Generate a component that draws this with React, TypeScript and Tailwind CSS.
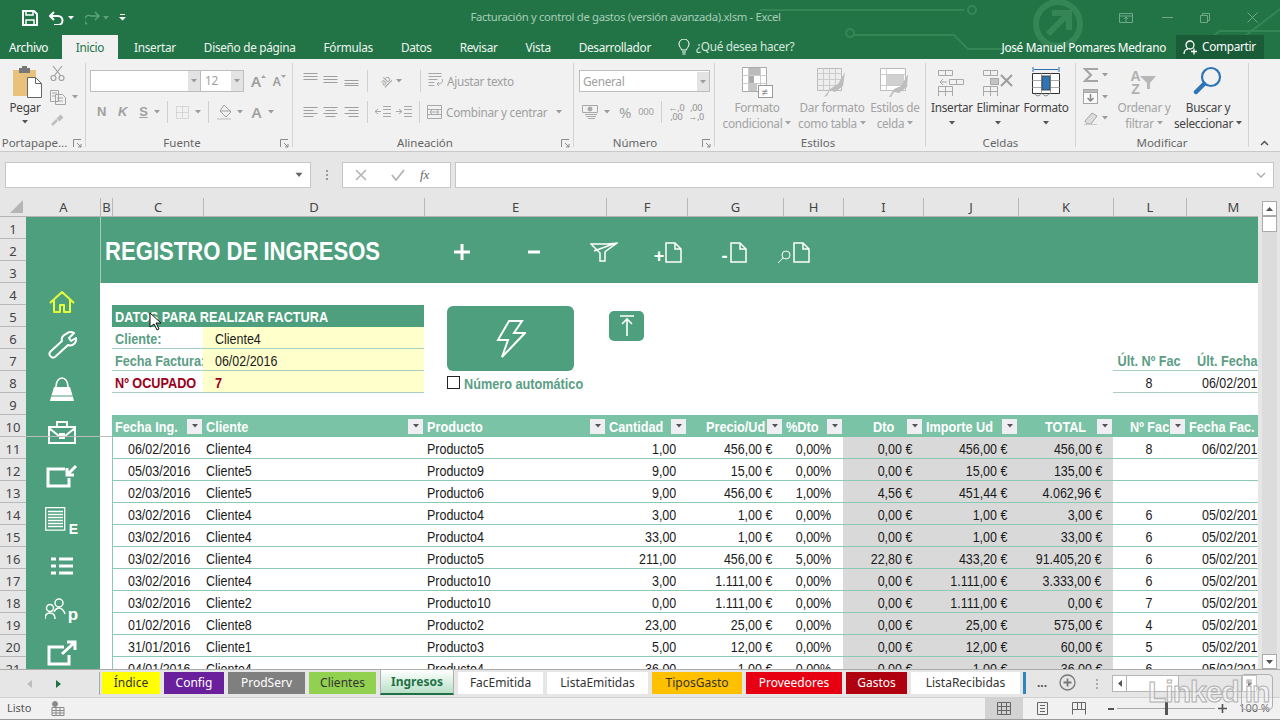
import React from "react";

const SHEETFONT = "font-['Liberation_Sans',sans-serif]";
const ROW = ["", "row-start-1", "row-start-2", "row-start-3", "row-start-4", "row-start-5", "row-start-6", "row-start-7", "row-start-8", "row-start-9", "row-start-10", "row-start-11", "row-start-12", "row-start-13", "row-start-14", "row-start-15", "row-start-16", "row-start-17", "row-start-18", "row-start-19", "row-start-20", "row-start-21"];

// Arial Narrow is not installed: the condensed look comes from a horizontal scale on the text box
const Nw = ({ o = "origin-left", b = false, children }: { o?: string; b?: boolean; children: React.ReactNode }) => (
  <span className={"inline-block whitespace-nowrap translate-y-[1.5px] " + (b ? "scale-x-[.875] " : "scale-x-[.86] ") + o}>{children}</span>
);

const Svg = ({ w, h, c = "#9b9b9b", sw = 1, className = "", children }: { w: number; h: number; c?: string; sw?: number; className?: string; children: React.ReactNode }) => (
  <svg width={w} height={h} viewBox={`0 0 ${w} ${h}`} fill="none" stroke={c} strokeWidth={sw} className={"shrink-0 block " + className}>{children}</svg>
);
const Caret = ({ c = "#9b9b9b", className = "" }: { c?: string; className?: string }) => (
  <svg width="6" height="4" viewBox="0 0 6 4" className={"shrink-0 block " + className}><path d="M0 0h6L3 3.5z" fill={c} /></svg>
);
const Launcher = () => (
  <Svg w={9} h={9} c="#8a8a8a"><path d="M.5 8V.5H8M4 4l4 4M8 5v3H5" /></Svg>
);

const Group = ({ className, label, labelClass = "", launcher, children }: { className: string; label: string; labelClass?: string; launcher?: boolean; children: React.ReactNode }) => (
  <div className={"flex flex-col h-[84px] mt-[4px] border-r border-[#d4d4d4] shrink-0 " + className}>
    <div className="h-[71px] flex shrink-0">{children}</div>
    <div className={"h-[18px] shrink-0 flex items-center justify-center relative text-[11.5px] text-[#666] whitespace-nowrap " + labelClass}>
      {label}
      {launcher && <span className="absolute right-[3px] top-[5px]"><Launcher /></span>}
    </div>
  </div>
);

const BigBtn = ({ className, icon, l1, l2, faded = true, caret = true }: { className: string; icon: React.ReactNode; l1: string; l2?: string; faded?: boolean; caret?: boolean }) => (
  <div className={"flex flex-col items-center leading-[16px] shrink-0 whitespace-nowrap " + (faded ? "text-[#a3a3a3] " : "text-[#444] ") + className}>
    <div className="h-[33px] mt-[3px] flex items-center justify-center">{icon}</div>
    <div>{l1}</div>
    <div className="flex items-center gap-[3px] h-[16px]">
      {l2}
      {caret && <Caret c={faded ? "#a3a3a3" : "#555"} />}
    </div>
  </div>
);

const Paste = () => (
  <svg width="29" height="32" viewBox="0 0 29 32" className="block">
    <rect x="0" y="4" width="23" height="26" fill="#e8c27a" />
    <rect x="6" y="2" width="11" height="5" fill="#777" />
    <rect x="9" y="0" width="5" height="3" fill="#777" />
    <path d="M14.5 11.5h8l6 6v14h-14z" fill="#fff" stroke="#666" />
    <path d="M22.500 11.500v6h6" fill="none" stroke="#666" />
  </svg>
);

const AlignLines = ({ ys, lens, anchor }: { ys: number[]; lens: number[]; anchor: "l" | "c" | "r" }) => (
  <Svg w={15} h={16} c="#9f9f9f">
    {ys.map((y, i) => {
      const len = lens[i % lens.length];
      const x = anchor === "l" ? 0.5 : anchor === "c" ? 7.500 - len / 2 : 14.500 - len;
      return <path key={i} d={`M${x} ${y + 0.5}h${len}`} />;
    })}
  </Svg>
);

const Ribbon = () => (
  <div className="flex h-[93px] bg-[#f1f1f1] border-b border-[#c9c9c9] relative text-[11.8px] tracking-[-.3px]">
    <Group className="w-[86px]" label="Portapape..." labelClass="pr-[16px] tracking-[0px]" launcher>
      <div className="w-[50px] flex flex-col items-center">
        <div className="mt-[3px] ml-[5px]"><Paste /></div>
        <div className="text-[#444] leading-[16px] mt-[1px]">Pegar</div>
        <Caret c="#555" className="mt-[5px]" />
      </div>
      <div className="flex flex-col pt-[2px] gap-[8px]">
        <Svg w={15} h={16} c="#a0a0a0" sw={1.2}><path d="M3 1l8 10M12 1L4 11" /><circle cx="3.500" cy="13" r="2.500" /><circle cx="11.500" cy="13" r="2.500" /></Svg>
        <div className="flex items-center gap-[6px]">
          <Svg w={16} h={16} c="#a5a5a5"><path d="M.5 1.500h8v11h-8zM5.500 5.500h7l3 3v7h-10zM2 4h5M2 7h3M7 9h6M7 12h6" /></Svg>
          <Caret />
        </div>
        <Svg w={16} h={14} c="#bdbdbd" sw={2.500}><path d="M2 12l5-5" /><path d="M8 7l4-4" strokeWidth={4} /></Svg>
      </div>
    </Group>
    <Group className="w-[207px]" label="Fuente" labelClass="pr-[14px] tracking-[0px]" launcher>
      <div className="pl-[4px] w-full">
        <div className="flex items-center mt-[7px] h-[22px]">
          <div className="w-[110px] h-[22px] bg-white border border-[#bdbdbd] flex justify-end border-r-0">
            <div className="w-[12px] bg-[#e3e3e3] flex items-center justify-center"><Caret /></div>
          </div>
          <div className="w-[44px] h-[22px] bg-white border border-[#bdbdbd] flex justify-between items-center pl-[4px] text-[#a0a0a0]">
            12
            <div className="w-[12px] h-full bg-[#e3e3e3] flex items-center justify-center"><Caret /></div>
          </div>
          <span className="ml-[7px] text-[15px] font-semibold text-[#9c9c9c] leading-none">A</span>
          <Svg w={5} h={3} c="#888" className="mb-[10px]"><path d="M0 3l2.500-3L5 3z" fill="#a4a4a4" stroke="none" /></Svg>
          <span className="ml-[7px] text-[12px] font-semibold text-[#9c9c9c] leading-none mt-[2px]">A</span>
          <Svg w={5} h={3} c="#888" className="mb-[10px]"><path d="M0 0l2.500 3L5 0z" fill="#a4a4a4" stroke="none" /></Svg>
        </div>
        <div className="flex items-center mt-[9px] h-[22px] text-[#a0a0a0]">
          <span className="ml-[7px] text-[13px] font-bold font-['Liberation_Sans']">N</span>
          <span className="ml-[12px] text-[13px] font-bold italic font-['Liberation_Sans']">K</span>
          <span className="ml-[12px] text-[13px] font-bold underline font-['Liberation_Sans']">S</span>
          <Caret className="ml-[6px]" />
          <div className="w-px h-[22px] bg-[#d0d0d0] ml-[7px]" />
          <Svg w={13} h={13} c="#bcbcbc" className="ml-[8px]"><path d="M.5.500h12v12H.500zM6.500.500v12M.500 6.500h12" strokeDasharray="1 1" /></Svg>
          <Caret className="ml-[6px]" />
          <div className="w-px h-[22px] bg-[#d0d0d0] ml-[7px]" />
          <Svg w={18} h={16} c="#a0a0a0" className="ml-[8px]"><path d="M7 1l7 7-5 5-6-6zM3 7h11" /><path d="M0 15h14" stroke="#d6d6d6" strokeWidth={2} /></Svg>
          <Caret className="ml-[2px]" />
          <span className="ml-[9px] text-[15px] font-semibold">A</span>
          <Caret className="ml-[7px]" />
        </div>
      </div>
    </Group>
    <Group className="w-[281px]" label="Alineación" labelClass="pr-[16px] tracking-[0px]" launcher>
      <div className="pl-[10px] w-full">
        <div className="flex items-start mt-[7px] h-[22px]">
          <AlignLines ys={[3, 6, 9]} lens={[14]} anchor="c" />
          <span className="w-[5px]" />
          <AlignLines ys={[6, 9, 12]} lens={[14]} anchor="c" />
          <span className="w-[6px]" />
          <AlignLines ys={[10, 13, 15]} lens={[14]} anchor="c" />
          <div className="w-px h-[22px] bg-[#d0d0d0] ml-[8px]" />
          <div className="w-[15px] h-[16px] ml-[9px] mt-[2px] flex items-center justify-center text-[9px] leading-none text-[#a0a0a0] -rotate-45 overflow-visible underline">ab</div>
          <Caret className="ml-[4px] mt-[9px]" />
          <div className="w-px h-[22px] bg-[#d0d0d0] ml-[18px]" />
          <Svg w={15} h={16} c="#a8a8a8" className="ml-[7px] mt-[2px]"><path d="M.5 1.500h13M.5 4.500h13M.5 7.500h9M.5 10.500h6M.5 13.500h6M14 7c2 3-1 5-5 5M11 10l-2 2 2 2" /></Svg>
          <span className="ml-[4px] text-[#a0a0a0] leading-[23px] whitespace-nowrap">Ajustar texto</span>
        </div>
        <div className="flex items-start mt-[9px] h-[22px]">
          <AlignLines ys={[6, 9, 12, 15]} lens={[14, 10]} anchor="l" />
          <span className="w-[5px]" />
          <AlignLines ys={[6, 9, 12, 15]} lens={[14, 10]} anchor="c" />
          <span className="w-[6px]" />
          <AlignLines ys={[6, 9, 12, 15]} lens={[14, 10]} anchor="r" />
          <div className="w-px h-[22px] bg-[#d0d0d0] ml-[8px]" />
          <Svg w={16} h={14} c="#a8a8a8" className="ml-[7px] mt-[4px]"><path d="M8 1.500h8M8 4.500h8M8 8.500h8M8 11.500h8" /><path d="M6 6.500H0M3 4l-3 2.500L3 9" /></Svg>
          <Svg w={16} h={14} c="#a8a8a8" className="ml-[5px] mt-[4px]"><path d="M8 1.500h8M8 4.500h8M8 8.500h8M8 11.500h8" /><path d="M0 6.500h6M3 4l3 2.500L3 9" /></Svg>
          <div className="w-px h-[22px] bg-[#d0d0d0] ml-[7px]" />
          <Svg w={15} h={14} c="#a8a8a8" className="ml-[7px] mt-[4px]"><path d="M.5.500h14v13H.500zM.5 4.500h14M.5 9.500h14M3 7h9M5 5l-2 2 2 2M10 5l2 2-2 2" /></Svg>
          <span className="ml-[4px] text-[#a0a0a0] leading-[22px] whitespace-nowrap">Combinar y centrar</span>
          <Caret className="ml-[9px] mt-[9px]" />
        </div>
      </div>
    </Group>
    <Group className="w-[141px]" label="Número" labelClass="pr-[18px] tracking-[0px]" launcher>
      <div className="pl-[5px] w-full">
        <div className="mt-[7px] w-[131px] h-[22px] bg-white border border-[#bdbdbd] flex justify-between items-center pl-[3px] pt-[1px] text-[#a0a0a0]">
          General
          <div className="w-[12px] h-full bg-[#e3e3e3] flex items-center justify-center"><Caret /></div>
        </div>
        <div className="flex items-center mt-[9px] h-[22px] text-[#a0a0a0]">
          <Svg w={17} h={16} c="#a8a8a8" className="ml-[3px]"><path d="M.5 1.500h15v7H.500z" /><circle cx="8" cy="5" r="2" fill="#a8a8a8" /><path d="M3 10.500h12M4 12.500h10M6 14.500h7" /></Svg>
          <Caret className="ml-[5px]" />
          <span className="ml-[9px] text-[15px] leading-none">%</span>
          <span className="ml-[7px] text-[9.5px] leading-none">000</span>
          <div className="w-px h-[22px] bg-[#d0d0d0] ml-[7px]" />
          <span className="ml-[7px] text-[9px] leading-[9px] text-center text-[#8f8f8f] whitespace-nowrap">←,0<br />,00</span>
          <span className="ml-[4px] text-[9px] leading-[9px] text-center text-[#8f8f8f] whitespace-nowrap">,00<br />→,0</span>
        </div>
      </div>
    </Group>
    <Group className="w-[211px]" label="Estilos" labelClass="pr-[4px] tracking-[0px]">
      <BigBtn className="w-[84px]" l1="Formato" l2="condicional" icon={
        <svg width="31" height="31" viewBox="0 0 31 31"><path d="M.5.500h24v24H.500z" fill="#fff" stroke="#aaa" /><rect x="6" y="1" width="12" height="7" fill="#bbb" /><rect x="6" y="8" width="6" height="8" fill="#aaa" /><rect x="6" y="16" width="9" height="8" fill="#c6c6c6" /><path d="M.5 8.500h24M.5 16.500h24M6.500.500v24M18.500.500v24" stroke="#ccc" fill="none" /><rect x="16.500" y="18.500" width="14" height="12" fill="#fff" stroke="#999" /><text x="19.500" y="28.500" fontSize="11" fill="#888" fontFamily="Liberation Sans">≠</text></svg>
      } />
      <BigBtn className="w-[66px]" l1="Dar formato" l2="como tabla" icon={
        <svg width="30" height="30" viewBox="0 0 30 30"><path d="M.5.500h24v22H.500z" fill="#eee" stroke="#bbb" /><path d="M.5 5.500h24M.5 11.500h24M.5 17.500h24M6.500.500v22M12.500.500v22M18.500.500v22" stroke="#ccc" fill="none" /><path d="M7 29l6-8 8-5 7-12-2 14-8 6-5-2-3 6z" fill="#bdbdbd" /></svg>
      } />
      <BigBtn className="w-[60px]" l1="Estilos de" l2="celda" icon={
        <svg width="30" height="30" viewBox="0 0 30 30"><path d="M.5.500h25v22H.500z" fill="#fff" stroke="#bbb" /><rect x="6" y="6" width="18" height="11" fill="#d0d0d0" /><path d="M.5 6.500h25M.5 17.500h25M6.500.500v22" stroke="#ccc" fill="none" /><path d="M9 29l5-8 7-3 7-12-1 13-8 6-5-1-3 5z" fill="#bdbdbd" /></svg>
      } />
    </Group>
    <Group className="w-[150px]" label="Celdas" labelClass="tracking-[0px]">
      <BigBtn className="w-[48px] ml-[2px]" faded={false} l1="Insertar" icon={
        <Svg w={28} h={27} c="#a9a9a9"><path d="M.5 1.500h7v5h-7zM7.500 1.500h7v5h-7zM11.500 10.500h7v5h-7zM18.500 10.500h7v5h-7zM.5 17.500h14v10H.500zM7.500 17.500v10M.5 22.500h14M9 13H2M5 10l-3 3 3 3" /></Svg>
      } />
      <BigBtn className="w-[44px]" faded={false} l1="Eliminar" icon={
        <Svg w={30} h={27} c="#a9a9a9"><path d="M.5 1.500h7v5h-7zM7.500 1.500h7v5h-7zM.5 17.500h14v10H.500zM7.500 17.500v10M.5 22.500h14" /><rect x="7.500" y="9.500" width="8" height="6" fill="#c4c4c4" /><path d="M18 6l11 11M29 6L18 17" strokeWidth={2} stroke="#9d9d9d" /></Svg>
      } />
      <BigBtn className="w-[52px]" faded={false} l1="Formato" icon={
        <Svg w={28} h={33} c="#444"><path d="M1 1v5M27 1v5M2 3.500h24" stroke="#2e6fb0" /><path d="M.5 7.500h27v20H.500z" fill="#fff" stroke="#333" /><path d="M.5 14.500h27M.5 21.500h27M9.500 7.500v20M18.500 7.500v20" stroke="#aaa" /><rect x="10" y="10" width="8" height="14" fill="#2e75b6" /><path d="M3 27.500c0 3 5 3 6 0M11 27.500c0 3 5 3 6 0" stroke="#777" /></Svg>
      } />
    </Group>
    <Group className="w-[173px]" label="Modificar" labelClass="tracking-[0px]">
      <div className="w-[36px] pl-[7px] flex flex-col pt-[4px] gap-[5px] shrink-0">
        <div className="flex items-center gap-[3px]">
          <Svg w={16} h={16} c="#a5a5a5" sw={2.200}><path d="M15 2H2l6 6-6 6h13" /></Svg>
          <Caret />
        </div>
        <div className="flex items-center gap-[3px] mt-[1px]">
          <Svg w={16} h={16} c="#a5a5a5"><rect x=".5" y=".5" width="14" height="14" fill="#fafafa" /><path d="M.5.500h14v3H.500z" fill="#bbb" /><path d="M7.500 5v7M4.500 9l3 3 3-3" strokeWidth={1.500} stroke="#888" /></Svg>
          <Caret />
        </div>
        <div className="flex items-center gap-[3px] mt-[1px]">
          <Svg w={16} h={14} c="#a5a5a5"><path d="M2 10l7-8 5 3-6 8H4z" fill="#ddd" /><path d="M1 13.500h13" stroke="#ccc" /></Svg>
          <Caret />
        </div>
      </div>
      <BigBtn className="w-[64px]" l1="Ordenar y" l2="filtrar" icon={
        <div className="flex items-center">
          <div className="text-[14px] leading-[13px] font-bold text-[#b0b0b0] font-['Liberation_Sans'] text-center">A<br />Z</div>
          <Svg w={17} h={16} c="#aaa"><path d="M0 1h16l-6 7v6H7V8z" fill="#b7b7b7" stroke="none" /></Svg>
        </div>
      } />
      <BigBtn className="w-[64px]" faded={false} l1="Buscar y" l2="seleccionar" icon={
        <Svg w={30} h={29} c="#2e75b6" sw={2.200} className="mb-[4px]"><circle cx="18" cy="11" r="9" /><path d="M11 18L3 26" strokeWidth={4.500} strokeLinecap="round" /></Svg>
      } />
    </Group>
    <div className="flex-1 flex items-end justify-center pb-[5px]">
      <Svg w={9} h={6} c="#555" sw={1.500}><path d="M1 5l3.500-3.500L8 5" /></Svg>
    </div>
  </div>
);

const TABS = ["Insertar", "Diseño de página", "Fórmulas", "Datos", "Revisar", "Vista", "Desarrollador"];

const TitleBar = () => (
  <div className="h-[59px] bg-[#227447] relative text-white overflow-hidden">
    <svg width="1280" height="59" viewBox="0 0 1280 59" fill="none" stroke="#358557" strokeWidth="2" className="absolute left-0 top-0">
      <path d="M760 10h204M972 14a4 4 0 1 1 .1 0M850 37a4 4 0 1 1 .1 0M854 35h100l14 14h50M1180 59l40-28h60M1215 59l65-50" />
      <circle cx="1058" cy="24" r="22" strokeWidth="6" />
      <path d="M1048 34l20-20M1052 13h17v17" strokeWidth="6" />
    </svg>
    <div className="h-[35px] flex items-center relative">
      <Svg w={16} h={16} c="#fff" sw={2} className="ml-[22px]"><path d="M1 1h11l3 3v11H1z" /><path d="M4 1v4h7V1M4 15v-5h8v5" strokeWidth={1.500} /></Svg>
      <Svg w={16} h={14} c="#fff" sw={2} className="ml-[11px]"><path d="M5 1L1 5l4 4M1 5h8a4.500 4.500 0 0 1 0 9H5" /></Svg>
      <Caret c="#fff" className="ml-[3px]" />
      <Svg w={15} h={14} c="#5ea37d" sw={1.500} className="ml-[11px]"><path d="M10 1l4 4-4 4M14 5H6a4 4 0 0 0-4 8" /></Svg>
      <Caret c="#5ea37d" className="ml-[3px]" />
      <svg width="8" height="7" viewBox="0 0 8 7" className="ml-[10px] block"><path d="M1 .5h5" stroke="#fff" /><path d="M0 3h7L3.500 6.500z" fill="#fff" /></svg>
      <div className="flex-1 text-center text-[11.3px] tracking-[-.33px] text-[#a7cdb6] pl-[24px]">Facturación y control de gastos (versión avanzada).xlsm - Excel</div>
      <div className="w-[180px] flex items-center text-[#6fa98a]">
        <Svg w={14} h={10} c="#6fa98a" className="ml-[19px]"><path d="M.5.500h13v9H.500zM.5 3h13M7 9V4.500M5 6l2-2 2 2" /></Svg>
        <div className="w-[11px] h-px bg-[#6fa98a] ml-[29px]" />
        <Svg w={10} h={10} c="#6fa98a" className="ml-[27px]"><path d="M.5 2.500h7v7h-7zM2.500 2V.5h7v7H8" /></Svg>
        <Svg w={11} h={11} c="#6fa98a" className="ml-[37px]"><path d="M.5.500l10 10M10.500.500l-10 10" /></Svg>
      </div>
    </div>
    <div className="h-[24px] flex items-stretch text-[11.8px] tracking-[-.3px] relative">
      <div className="pl-[9px] w-[62px] leading-[24px]">Archivo</div>
      <div className="w-[56px] bg-[#f1f1f1] text-[#227447] text-center leading-[24px]">Inicio</div>
      <div className="flex gap-[28px] pl-[16px] leading-[24px] text-[#eef6f0] whitespace-nowrap">
        {TABS.map((t) => <span key={t}>{t}</span>)}
      </div>
      <div className="flex items-center ml-[27px] gap-[6px] text-[#d5e7db]">
        <Svg w={12} h={16} c="#fff"><path d="M3.500 11c0-2-2.500-3-2.500-6a5 5 0 0 1 10 0c0 3-2.500 4-2.500 6zM4 13h4M4.500 15h3" /></Svg>
        <span className="whitespace-nowrap">¿Qué desea hacer?</span>
      </div>
      <div className="flex-1" />
      <div className="leading-[24px] whitespace-nowrap mr-[10px]">José Manuel Pomares Medrano</div>
      <div className="w-[88px] mr-[16px] bg-[#1a5c38] flex items-center pl-[7px] gap-[4px]">
        <Svg w={15} h={15} c="#fff" sw={1.300}><circle cx="7" cy="5" r="4" /><path d="M1 14c0-3 2-5 4-5M8 11.500h6M11 8.500v6" /></Svg>
        Compartir
      </div>
    </div>
  </div>
);

const FormulaBar = () => (
  <div className="h-[43px] bg-[#e6e6e6] flex pt-[10px]">
    <div className="ml-[5px] w-[306px] h-[26px] bg-white border border-[#c6c6c6] flex items-center justify-end pr-[8px]">
      <Caret c="#666" className="scale-125" />
    </div>
    <div className="w-[31px] flex flex-col items-center justify-center gap-[2px] h-[26px]">
      <span className="w-[2px] h-[2px] bg-[#999]" /><span className="w-[2px] h-[2px] bg-[#999]" /><span className="w-[2px] h-[2px] bg-[#999]" />
    </div>
    <div className="w-[109px] h-[26px] bg-white border border-[#c6c6c6] flex items-center">
      <Svg w={12} h={12} c="#b4b4b4" sw={1.600} className="ml-[12px]"><path d="M1 1l10 10M11 1L1 11" /></Svg>
      <Svg w={14} h={12} c="#b4b4b4" sw={1.800} className="ml-[24px]"><path d="M1 6l4 5 8-10" /></Svg>
      <span className="ml-[15px] text-[13px] italic text-[#666] font-['Liberation_Serif',serif]">fx</span>
    </div>
    <div className="ml-[4px] w-[819px] h-[26px] bg-white border border-[#c6c6c6] flex items-center justify-end pr-[7px]">
      <Svg w={10} h={6} c="#aaa" sw={1.300}><path d="M1 1l4 4 4-4" /></Svg>
    </div>
  </div>
);

const COLS = [["A", "w-[74px]"], ["B", "w-[12px]"], ["C", "w-[91px]"], ["D", "w-[221px]"], ["E", "w-[182px]"], ["F", "w-[81px]"], ["G", "w-[96px]"], ["H", "w-[60px]"], ["I", "w-[80px]"], ["J", "w-[95px]"], ["K", "w-[95px]"], ["L", "w-[73px]"], ["M", "w-[94px]"]];

const ColHeader = () => (
  <div className="h-[22px] flex bg-[#e6e6e6] border-b border-[#b4b4b4] text-[13px] text-[#444]">
    <div className="w-[26px] flex items-end justify-end pr-[3px] pb-[3px] shrink-0">
      <svg width="13" height="13" viewBox="0 0 13 13" className="block"><path d="M13 0v13H0z" fill="#b5b5b5" /></svg>
    </div>
    {COLS.map(([c, w]) => (
      <div key={c} className={"flex items-center justify-center relative shrink-0 pt-[4px] pl-[1px] " + w}>
        {c}
        <span className="absolute -right-px top-[3px] bottom-0 w-px bg-[#b8b8b8]" />
      </div>
    ))}
  </div>
);

const RowHeaders = () => (
  <div className="w-[26px] shrink-0 flex flex-col bg-[#e6e6e6] text-[13px] text-[#444]">
    {Array.from({ length: 21 }, (_, i) => (
      <div key={i} className="h-[22px] shrink-0 flex items-center justify-center border-b border-[#b9b9b9] pt-[4px]">{i + 1}</div>
    ))}
  </div>
);

const SIDE_ICONS: React.ReactNode[] = [
  <Svg w={26} h={24} c="#e4ff3a" sw={2}><path d="M1 13L13 2l12 11M5 10v12h6v-7h4v7h6V10" strokeLinejoin="round" /></Svg>,
  <Svg w={30} h={30} c="#fff" sw={2}><path d="M19 4a7 7 0 0 1 8-1l-5 5 2 3 5-3c1 4-3 9-8 7L8 27c-3 2-7-2-5-5L15 11c-1-3 1-6 4-7z" strokeLinejoin="round" /></Svg>,
  <svg width="26" height="26" viewBox="0 0 26 26" fill="none" className="block"><path d="M7 11c0-6 3-9 6-9s6 3 6 9" stroke="#fff" strokeWidth="1.500" /><path d="M5 11h16l3 10 1 4H1l1-4z" fill="#fff" /><path d="M2 20h22" stroke="#4d9f7e" /></svg>,
  <Svg w={28} h={23} c="#fff" sw={2}><path d="M1 6h26v16H1zM9 5V1h10v4M1 7l10 8h6l10-8M12 13h4v4h-4z" /></Svg>,
  <Svg w={32} h={24} c="#fff" sw={3}><path d="M19 5H2v17h21v-8M30 2l-9 9M21 4v7h7" /></Svg>,
  <div className="flex items-end"><Svg w={21} h={24} c="#fff" sw={1.300}><path d="M.7.700h19v22.500H.7zM3 4.500h15M3 7.500h15M3 10.500h15M3 13.500h15M3 16.500h15M3 19.500h15" /></Svg><span className="text-[14px] leading-[14px] font-bold text-white ml-[3px] -mb-[5px]">E</span></div>,
  <Svg w={22} h={20} c="#fff" sw={3}><path d="M0 3h5M8 3h14M0 10h5M8 10h14M0 17h5M8 17h14" /></Svg>,
  <div className="flex items-end text-white"><Svg w={22} h={24} c="#fff" sw={1.500}><circle cx="5" cy="11" r="3.500" /><path d="M0 22c0-4 2-6 5-6s5 2 5 6" /><circle cx="14" cy="6" r="4" /><path d="M9 15c1-2 3-4 5-4s5 2 6 6" /></Svg><span className="text-[17px] leading-[17px] font-bold ml-[1px] -mb-[2px]">p</span></div>,
  <Svg w={30} h={26} c="#fff" sw={3}><path d="M17 7H2v17h20v-9M28 2L15 14M20 2h8v8" /></Svg>,
];

type Row = string[];
const DATA: Row[] = [
  ["06/02/2016", "Cliente4", "Producto5", "1,00", "456,00 €", "0,00%", "0,00 €", "456,00 €", "456,00 €", "8", "06/02/2016"],
  ["05/03/2016", "Cliente5", "Producto9", "9,00", "15,00 €", "0,00%", "0,00 €", "15,00 €", "135,00 €", "", ""],
  ["02/03/2016", "Cliente5", "Producto6", "9,00", "456,00 €", "1,00%", "4,56 €", "451,44 €", "4.062,96 €", "", ""],
  ["03/02/2016", "Cliente4", "Producto4", "3,00", "1,00 €", "0,00%", "0,00 €", "1,00 €", "3,00 €", "6", "05/02/2016"],
  ["03/02/2016", "Cliente4", "Producto4", "33,00", "1,00 €", "0,00%", "0,00 €", "1,00 €", "33,00 €", "6", "05/02/2016"],
  ["03/02/2016", "Cliente4", "Producto5", "211,00", "456,00 €", "5,00%", "22,80 €", "433,20 €", "91.405,20 €", "6", "05/02/2016"],
  ["03/02/2016", "Cliente4", "Producto10", "3,00", "1.111,00 €", "0,00%", "0,00 €", "1.111,00 €", "3.333,00 €", "6", "05/02/2016"],
  ["03/02/2016", "Cliente2", "Producto10", "0,00", "1.111,00 €", "0,00%", "0,00 €", "1.111,00 €", "0,00 €", "7", "05/02/2016"],
  ["01/02/2016", "Cliente8", "Producto2", "23,00", "25,00 €", "0,00%", "0,00 €", "25,00 €", "575,00 €", "4", "05/02/2016"],
  ["31/01/2016", "Cliente1", "Producto3", "5,00", "12,00 €", "0,00%", "0,00 €", "12,00 €", "60,00 €", "5", "05/02/2016"],
  ["04/01/2016", "Cliente4", "Producto4", "36,00", "1,00 €", "0,00%", "0,00 €", "1,00 €", "36,00 €", "6", "05/02/2016"],
];
const CELL_CLS = [
  "pl-[15px] border-l border-l-[#8cc9b3]",
  "pl-[3px]",
  "pl-[3px]",
  "justify-end pr-[11px]",
  "justify-end pr-[11px]",
  "justify-end pr-[12px]",
  "justify-end pr-[11px] bg-[#d9d9d9]",
  "justify-end pr-[11px] bg-[#d9d9d9]",
  "justify-end pr-[11px] bg-[#d9d9d9]",
  "justify-center",
  "pl-[16px]",
];
const CELL_O = ["origin-left", "origin-left", "origin-left", "origin-right", "origin-right", "origin-right", "origin-right", "origin-right", "origin-right", "origin-center", "origin-left"];

const HEAD = [
  { t: "Fecha Ing.", c: "pl-[3px]" },
  { t: "Cliente", c: "pl-[3px]" },
  { t: "Producto", c: "pl-[3px]" },
  { t: "Cantidad", c: "pl-[3px]" },
  { t: "Precio/Ud", c: "pl-[19px]" },
  { t: "%Dto", c: "pl-[3px]" },
  { t: "Dto", c: "pl-[30px]" },
  { t: "Importe Ud", c: "pl-[3px]" },
  { t: "TOTAL", c: "pl-[27px]" },
  { t: "Nº Fac", c: "pl-[17px]" },
  { t: "Fecha Fac.", c: "pl-[3px]" },
];

const FilterBtn = () => (
  <div className="w-[15px] h-[15px] bg-[#eeeef3] flex items-center justify-center shrink-0 ml-auto mr-[1px] relative"><Caret c="#555" /></div>
);

const BANNER_ICONS: React.ReactNode[] = [
  <Svg w={18} h={18} c="#fff" sw={3}><path d="M9 1v16M1 9h16" /></Svg>,
  <Svg w={14} h={18} c="#fff" sw={3}><path d="M1 9h12" /></Svg>,
  <Svg w={28} h={20} c="#fff" sw={1.500}><path d="M1 2h16l10-1-11 8-1 1v9h-5v-8L1 2zM4 9l22-8" /></Svg>,
  <div className="flex items-end text-white"><span className="text-[18px] font-bold leading-[14px] mr-[1px]">+</span><Svg w={17} h={21} c="#fff" sw={1.500}><path d="M1 1h9l6 6v13H1zM10 1v6h6" /></Svg></div>,
  <div className="flex items-end text-white"><span className="text-[18px] font-bold leading-[14px] mr-[2px]">-</span><Svg w={17} h={21} c="#fff" sw={1.500}><path d="M1 1h9l6 6v13H1zM10 1v6h6" /></Svg></div>,
  <div className="flex items-end"><Svg w={14} h={14} c="#fff" sw={1}><circle cx="9" cy="6" r="4" /><path d="M6 9l-5 5" /></Svg><Svg w={17} h={21} c="#fff" sw={1.500} className="ml-[2px]"><path d="M1 1h9l6 6v13H1zM10 1v6h6" /></Svg></div>,
];

const LBL = "px-[3px] pt-[1px] font-bold text-[#5b9e85] flex items-center whitespace-nowrap overflow-hidden";
const LINE = " border-b border-[#a8cfc0]";
const YEL = " bg-[#ffffcc] pl-[12px] pt-[1px] flex items-center";

const Sheet = () => (
  <div className={"grid grid-cols-[74px_12px_91px_221px_182px_81px_96px_60px_80px_95px_95px_73px_94px] auto-rows-[22px] bg-white text-[14.5px] text-[#1a1a1a] " + SHEETFONT}>
    <div className="col-start-1 row-start-1 row-span-21 bg-[#4d9f7e] flex flex-col items-center pt-[63px] pr-[3px]">
      {SIDE_ICONS.map((ic, i) => <div key={i} className={"h-[43.5px] shrink-0 flex items-center justify-center " + (i === 6 ? "mt-[3px]" : "")}>{ic}</div>)}
    </div>
    <div className="col-start-1 row-start-10 col-span-2 self-end h-px bg-[#bcbcbc] z-10" />
    <div className="col-start-2 col-span-12 row-start-1 row-span-3 bg-[#4d9f7e] border-l border-[#a9c9bb] flex items-center text-white pt-[4px]">
      <div className="w-[333px] pl-[4px] text-[25px] font-bold whitespace-nowrap shrink-0">
        <span className="inline-block origin-left scale-x-[.884]">REGISTRO DE INGRESOS</span>
      </div>
      {BANNER_ICONS.map((ic, i) => (
        <div key={i} className={"w-[56px] flex items-center justify-center shrink-0 " + ["", "ml-[16px]", "ml-[14px]", "ml-[8px]", "ml-[10px]", "ml-[3px]"][i]}>{ic}</div>
      ))}
    </div>

    <div className="col-start-3 col-span-2 row-start-5 bg-[#4d9f7e] text-white font-bold px-[3px] pb-[1px] flex items-center whitespace-nowrap"><Nw b>DATOS PARA REALIZAR FACTURA</Nw></div>

    <div className={"col-start-3 row-start-6" + LINE + " " + LBL}><Nw b>Cliente:</Nw></div>
    <div className={"col-start-4 row-start-6" + YEL + LINE}><Nw>Cliente4</Nw></div>
    <div className={"col-start-3 row-start-7" + LINE + " " + LBL}><Nw b>Fecha Factura:</Nw></div>
    <div className={"col-start-4 row-start-7" + YEL + LINE}><Nw>06/02/2016</Nw></div>
    <div className={"col-start-3 row-start-8" + LINE + " px-[3px] pt-[1px] font-bold text-[#9b0020] flex items-center overflow-hidden"}><Nw b>Nº OCUPADO</Nw></div>
    <div className={"col-start-4 row-start-8 font-bold text-[#9b0020]" + YEL + LINE}><Nw b>7</Nw></div>

    <div className="col-start-5 row-start-5 row-span-4 pl-[23px] pt-[1px] flex flex-col items-start">
      <div className="w-[127px] h-[65px] shrink-0 rounded-[6px] bg-[#4d9f7e] flex items-center justify-center">
        <Svg w={30} h={38} c="#fff" sw={2}><path d="M13 1h13L18 13h11L6 37l6-17H2z" strokeLinejoin="miter" /></Svg>
      </div>
      <div className="flex items-center mt-[1px] whitespace-nowrap">
        <span className="w-[13px] h-[13px] border border-[#222] bg-white shrink-0" />
        <span className="ml-[4px] font-bold text-[#5b9e85]"><Nw b>Número automático</Nw></span>
      </div>
    </div>
    <div className="col-start-6 row-start-5 row-span-2 pl-[3px] pt-[6px]">
      <div className="w-[35px] h-[30px] rounded-[5px] bg-[#4d9f7e] flex items-center justify-center">
        <Svg w={16} h={22} c="#fff" sw={1.600}><path d="M1 1h14M8 4v17M3 9l5-5 5 5" /></Svg>
      </div>
    </div>

    <div className="col-start-12 row-start-7 font-bold pt-[1px] text-[#5b9e85] flex items-center justify-center whitespace-nowrap border-b border-[#a8cfc0]"><Nw b o="origin-center">Últ. Nº Fac</Nw></div>
    <div className="col-start-13 row-start-7 font-bold pt-[1px] pl-[11px] text-[#5b9e85] flex items-center whitespace-nowrap border-b border-[#a8cfc0]"><Nw b>Últ. Fecha</Nw></div>
    <div className="col-start-12 row-start-8 pt-[1px] flex items-center justify-center border-b border-[#a8cfc0]"><Nw o="origin-center">8</Nw></div>
    <div className="col-start-13 row-start-8 pt-[1px] flex items-center pl-[16px] whitespace-nowrap overflow-hidden border-b border-[#a8cfc0]"><Nw>06/02/2016</Nw></div>

    <div className="col-start-3 col-span-11 row-start-10 grid grid-cols-subgrid bg-[#7bc3a6] text-white font-bold">
      {HEAD.map((h) => (
        <div key={h.t} className={"flex items-center whitespace-nowrap overflow-hidden " + h.c}>
          <div className="flex-1 min-w-0"><Nw b>{h.t}</Nw></div>
          {h.t !== "Fecha Fac." && <FilterBtn />}
        </div>
      ))}
    </div>

    {DATA.map((r, i) => (
      <div key={i} className={"col-start-3 col-span-11 grid grid-cols-subgrid " + ROW[i + 11]}>
        {r.map((c, j) => (
          <div key={j} className={"flex items-center pt-[1px] whitespace-nowrap overflow-hidden border-b border-b-[#8cc9b3] " + CELL_CLS[j]}><Nw o={CELL_O[j]}>{c}</Nw></div>
        ))}
      </div>
    ))}
  </div>
);

const SHEET_TABS = [
  { t: "Índice", c: "w-[58px] bg-[#ffff00] text-[#333]" },
  { t: "Config", c: "w-[60px] bg-[#6a1f9c] text-white" },
  { t: "ProdServ", c: "w-[77px] bg-[#7f7f7f] text-white" },
  { t: "Clientes", c: "w-[67px] bg-[#92d050] text-[#333]" },
  { t: "Ingresos", c: "w-[74px] -mt-[3px] h-[26px] border-x border-t border-[#b0b0b0] border-b-2 border-b-[#1f7145] bg-gradient-to-b from-white to-[#b7e0c8] text-[#1f7145] font-bold" },
  { t: "FacEmitida", c: "w-[85px] bg-white text-[#333]" },
  { t: "ListaEmitidas", c: "w-[101px] bg-white text-[#333]" },
  { t: "TiposGasto", c: "w-[90px] bg-[#ffc000] text-[#333]" },
  { t: "Proveedores", c: "w-[96px] bg-[#e60012] text-white" },
  { t: "Gastos", c: "w-[61px] bg-[#b00010] text-white" },
  { t: "ListaRecibidas", c: "w-[109px] bg-white text-[#333]" },
];

const TabsBar = () => (
  <div className="h-[28px] bg-[#e6e6e6] border-t border-[#ababab] flex items-start text-[12px] relative">
    <div className="w-[100px] h-[23px] mt-[2px] flex items-center border-r border-[#a8a8a8] shrink-0">
      <svg width="5" height="8" viewBox="0 0 5 8" className="ml-[27px] block"><path d="M5 0v8L0 4z" fill="#bdbdbd" /></svg>
      <svg width="5" height="8" viewBox="0 0 5 8" className="ml-[24px] block"><path d="M0 0v8l5-4z" fill="#1f7145" /></svg>
    </div>
    <div className="flex gap-[4px] ml-[2px] mt-[2px]">
      {SHEET_TABS.map((t) => (
        <div key={t.t} className={"h-[22px] flex items-center justify-center whitespace-nowrap shrink-0 " + t.c}>{t.t}</div>
      ))}
    </div>
    <div className="w-[3px] h-[22px] mt-[2px] bg-[#2e86c1] ml-[3px]" />
    <div className="ml-[11px] mt-[6px] text-[12px] font-bold text-[#555] leading-[14px]">...</div>
    <div className="ml-[12px] mt-[4px]">
      <Svg w={17} h={17} c="#777" sw={1.300}><circle cx="8.500" cy="8.500" r="7.500" /><path d="M8.500 4.500v8M4.500 8.500h8" strokeWidth={1.800} /></Svg>
    </div>
    <div className="ml-[20px] mt-[9px] flex flex-col gap-[2px]">
      <span className="w-[2px] h-[2px] bg-[#aaa]" /><span className="w-[2px] h-[2px] bg-[#aaa]" /><span className="w-[2px] h-[2px] bg-[#aaa]" />
    </div>
    <div className="ml-[14px] mt-[5px] w-[145px] h-[17px] border border-[#b5b5b5] flex items-center bg-[#e6e6e6]">
      <div className="w-[14px] h-full border-r border-[#b5b5b5] bg-white flex items-center justify-center"><svg width="4" height="7" viewBox="0 0 4 7" className="block"><path d="M4 0v7L0 3.500z" fill="#555" /></svg></div>
      <div className="w-[52px] h-full bg-white border-r border-[#b5b5b5]" />
      <div className="flex-1" />
      <div className="w-[14px] h-full border-l border-[#b5b5b5] bg-white flex items-center justify-center"><svg width="4" height="7" viewBox="0 0 4 7" className="block"><path d="M0 0v7l4-3.500z" fill="#555" /></svg></div>
    </div>
  </div>
);

const StatusBar = () => (
  <div className="h-[23px] bg-[#f1f1f1] border-t border-[#d0d0d0] border-b border-b-[#9a9a9a] flex items-center text-[11px] text-[#555]">
    <span className="ml-[7px] w-[44px]">Listo</span>
    <Svg w={14} h={15} c="#8a8a8a"><circle cx="4" cy="3" r="2.500" fill="#8a8a8a" /><path d="M1 6.500h12v8H1zM1 9.500h12M1 12h12M5 6.500v8M9 6.500v8" /></Svg>
    <div className="flex-1" />
    <div className="w-[38px] h-[21px] bg-[#d2d2d2] flex items-center justify-center">
      <Svg w={14} h={13} c="#666"><path d="M.5.500h13v12H.500zM.5 4.500h13M.5 8.500h13M4.500.500v12M9.500.500v12" /></Svg>
    </div>
    <div className="w-[38px] flex items-center justify-center">
      <Svg w={11} h={13} c="#666"><path d="M.5.500h10v12H.500zM3 3.500h5M3 6.500h5M3 9.500h5" /></Svg>
    </div>
    <div className="w-[36px] flex items-center justify-center">
      <Svg w={14} h={13} c="#666"><path d="M.5 12.500V.5h13v12M5.500.500v7h4v-7M.5 7.500h5M9.500 7.500h4" /></Svg>
    </div>
    <div className="w-[6px] h-[2px] bg-[#555] ml-[11px]" />
    <div className="w-[98px] h-px bg-[#aaa] ml-[3px] flex items-center justify-center">
      <span className="w-[3px] h-[13px] bg-[#555] relative" />
    </div>
    <Svg w={9} h={9} c="#555" sw={1.600} className="ml-[3px]"><path d="M4.500 0v9M0 4.500h9" /></Svg>
    <span className="ml-[12px] mr-[10px] whitespace-nowrap">100 %</span>
  </div>
);

export default function App() {
  return (
    <div className="w-[1280px] h-[720px] relative overflow-hidden bg-[#e6e6e6] font-['Noto_Sans',sans-serif]">
      <TitleBar />
      <Ribbon />
      <FormulaBar />
      <div className="flex h-[474px] overflow-hidden">
        <div className="w-[1258px] shrink-0 overflow-hidden">
          <ColHeader />
          <div className="flex">
            <RowHeaders />
            <Sheet />
          </div>
        </div>
        <div className="w-[22px] flex flex-col items-center pt-[6px] bg-[#e6e6e6]">
          <div className="w-[15px] flex-1 flex flex-col bg-[#dcdcdc]">
            <div className="h-[15px] bg-white border border-[#aaa] flex items-center justify-center"><svg width="7" height="4" viewBox="0 0 7 4" className="block"><path d="M0 4h7L3.500 0z" fill="#555" /></svg></div>
            <div className="h-[16px] bg-white border border-[#aaa]" />
            <div className="flex-1" />
            <div className="h-[15px] bg-white border border-[#aaa] flex items-center justify-center"><svg width="7" height="4" viewBox="0 0 7 4" className="block"><path d="M0 0h7L3.500 4z" fill="#555" /></svg></div>
          </div>
        </div>
      </div>
      <TabsBar />
      <StatusBar />
      <svg width="20" height="20" viewBox="0 0 20 20" className="absolute left-[149px] top-[312px] block">
        <path d="M1 1v14l4-3 3 6 2-1-3-6h5z" fill="#fff" stroke="#111" />
      </svg>
      <div className="absolute left-[1148px] top-[674px] flex items-center gap-[2px] text-[30px] leading-[34px] font-bold text-white/40 [-webkit-text-stroke:1px_#b0b0b0] font-['Liberation_Sans',sans-serif] tracking-[-1px]">
        Linked
        <span className="border border-[#b0b0b0] rounded-[4px] px-[3px] bg-white/20">in</span>
      </div>
    </div>
  );
}
